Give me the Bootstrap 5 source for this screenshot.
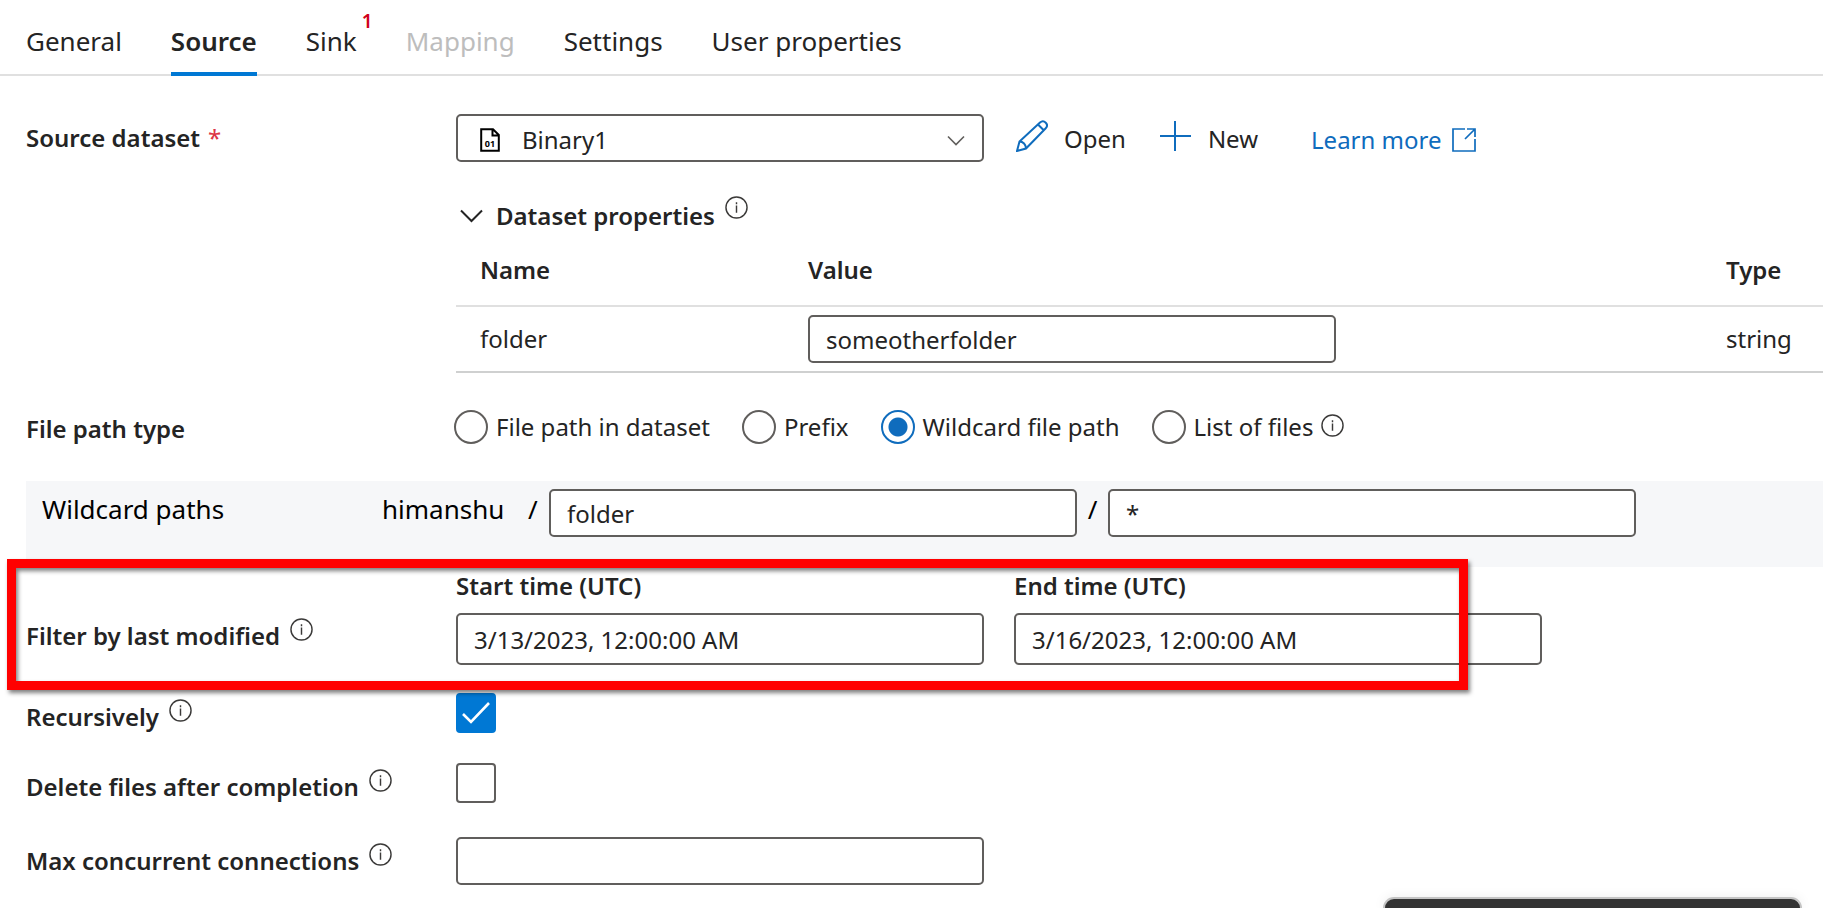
<!DOCTYPE html>
<html lang="en">
<head>
<meta charset="utf-8">
<meta name="viewport" content="width=device-width, initial-scale=1">
<title>Copy activity - Source</title>
<link href="https://cdn.jsdelivr.net/npm/bootstrap@5.3.0/dist/css/bootstrap.min.css" rel="stylesheet">
<style>
  :root { --ink: #242424; --line: #605e5c; --blue: #0078d4; --link: #0f6cbd; --field: 528px; }
  body { font-family: "Noto Sans", "Open Sans", sans-serif; font-size: 24px; line-height: 34px; color: var(--ink); background: #fff; overflow-x: hidden; }
  svg { display: block; flex: none; }
  .tabs { padding-left: 26px; gap: 49px; border-bottom: 2px solid #e0e0e0; font-size: 26px; }
  .tabs .nav-link { padding: 22px 0 14px; height: 74px; line-height: 38px; color: var(--ink); position: relative; }
  .tabs .active { font-weight: 600; }
  .tabs .active::after { content: ""; position: absolute; left: 0; right: 0; bottom: -2px; height: 4px; background: var(--blue); }
  .tabs .disabled { color: #bdbdbd; }
  .tabs .errors { position: absolute; left: 100%; top: 10px; margin-left: 5px; font-size: 19px; line-height: 22px; font-weight: 600; color: #d0021b; }
  .form-area { padding: 38px 0 0 26px; }
  .field-row { display: grid; grid-template-columns: 430px minmax(0, 1fr); }
  .field-name { font-weight: 600; display: flex; align-items: center; gap: 10px; height: 34px; white-space: nowrap; }
  .field-name svg { margin-bottom: 14px; }
  .required { gap: 8px; }
  .drop { padding-top: 8px; height: 40px; }
  .box { width: 100%; max-width: var(--field); height: 48px; border: 2px solid var(--line); border-radius: 5px; padding: 0 16px; color: var(--ink); background: #fff; font: inherit; }
  .box.tall { height: 52px; }
  .picker { position: relative; flex: 0 1 var(--field); }
  .picker select { appearance: none; padding: 3px 16px 0 64px; }
  .picker svg { position: absolute; top: 14px; pointer-events: none; }
  .picker .doc { left: 24px; }
  .picker .chev { right: 19px; top: 21px; }
  .cmd { border: 0; background: none; padding: 2px 0 0; margin-left: 32px; color: var(--ink); display: flex; align-items: center; gap: 16px; }
  .cmd + .cmd { margin-left: 34px; gap: 17px; }
  .cmd svg { margin-bottom: 6px; }
  .more { color: var(--link); text-decoration: none; padding-top: 4px; margin-left: 53px; gap: 10px; }
  .toggle-btn { border: 0; background: none; font-weight: 600; padding: 0 0 0 4px; margin-top: 34px; gap: 13px; height: 40px; color: var(--ink); }
  .toggle-btn .field-name svg { margin-bottom: 18px; }
  .props { margin: 0; width: 100%; table-layout: fixed; border-collapse: separate; border-spacing: 0; }
  .props th { height: 71px; font-weight: 600; border-bottom: 2px solid #e0e0e0; padding: 0 0 1px; }
  .props td { height: 66px; border-bottom: 2px solid #cfd0d0; padding: 0; }
  .props tr > :first-child { padding-left: 24px; width: 352px; }
  .props tr > :last-child { width: 97px; }
  .radios { gap: 32px; margin-left: -2px; }
  .opt { display: flex; align-items: center; gap: 8px; }
  .opt input { appearance: none; width: 34px; height: 34px; margin: 0; border: 2px solid var(--line); border-radius: 50%; background: #fff; }
  .opt input:checked { border-color: var(--link); background: radial-gradient(circle, var(--link) 9px, #fff 10px); }
  .band { background: #f6f7f9; height: 86px; padding: 8px 0 0 16px; color: #000; font-size: 26px; line-height: 40px; grid-template-columns: 340px minmax(0, 1fr); }
  .band .box { font-size: 24px; color: var(--ink); }
  .container-name { width: 146px; }
  .slash { width: 21px; }
  .slash-mid { width: 31px; text-align: center; }
  .filter-name { align-self: end; margin-bottom: 12px; }
  .times { display: flex; gap: 30px; }
  .time { flex: 0 1 var(--field); }
  .time .field-name { height: 38px; margin-bottom: 8px; }
  .mark-frame { position: absolute; inset: -8px 355px -25px -19px; border: 9px solid #f00; filter: drop-shadow(2px 3px 2px rgba(0,0,0,.5)); pointer-events: none; }
  .tick { appearance: none; display: block; width: 40px; height: 40px; margin: 0; border: 2px solid var(--line); border-radius: 4px; background: #fff; }
  .tick:checked { border-color: var(--blue); background: var(--blue) url("data:image/svg+xml,%3Csvg xmlns='http://www.w3.org/2000/svg' width='36' height='36' fill='none' stroke='white' stroke-width='2.6'%3E%3Cpath d='M5 19l8 8L31 8'/%3E%3C/svg%3E") center no-repeat; }
  .gap-above-s { margin-top: 30px; }
  .gap-above { margin-top: 37px; }
  .toast-peek { position: fixed; right: 21px; bottom: 0; width: 419px; height: 11px; border: 2px solid #c4c4c4; border-bottom: 0; border-radius: 18px 18px 0 0; background: #333; box-shadow: 0 0 12px rgba(0,0,0,.08); }
</style>
</head>
<body>
<svg class="d-none" xmlns="http://www.w3.org/2000/svg">
  <symbol id="info" viewBox="0 0 24 24"><circle cx="12" cy="12" r="11" fill="none" stroke="#3b3a39" stroke-width="1.5"/><path d="M12 10v7.500M12 6.500v2" stroke="#3b3a39" stroke-width="1.500"/></symbol>
</svg>

<nav class="nav flex-nowrap tabs">
  <a class="nav-link" href="#">General</a>
  <a class="nav-link active" href="#" aria-current="page">Source</a>
  <a class="nav-link" href="#">Sink<span class="errors">1</span></a>
  <a class="nav-link disabled" href="#" aria-disabled="true">Mapping</a>
  <a class="nav-link" href="#">Settings</a>
  <a class="nav-link text-nowrap" href="#">User properties</a>
</nav>

<main class="form-area">
  <div class="field-row">
    <label class="field-name required drop" for="dataset">Source dataset <span class="text-danger fw-normal">*</span></label>
    <div>
      <div class="d-flex">
        <div class="picker">
          <svg class="doc" width="20" height="24" viewBox="0 0 20 24"><path d="M1.200 1.200H13L18.800 7V22.800H1.200Z M12.500 1.500V7.500H18.500" fill="none" stroke="#000" stroke-width="2"/><text x="10" y="18.500" text-anchor="middle" font-size="9" font-weight="700">01</text></svg>
          <select id="dataset" class="box"><option>Binary1</option></select>
          <svg class="chev" width="18" height="12" viewBox="0 0 18 12"><path d="M1 1.500l8 8 8-8" fill="none" stroke="#605e5c" stroke-width="1.600"/></svg>
        </div>
        <button class="cmd" type="button">
          <svg width="32" height="32" viewBox="0 0 32 32" fill="none" stroke="#0f6cbd" stroke-width="2"><path d="M1 31L3.500 21.500L24 2.500C28-1 33.500 4.500 29.500 8.500L10 28.500ZM3.500 21.500C7 21.500 10 24.500 10 28.500M22 4.500L28 10.500"/></svg>Open</button>
        <button class="cmd" type="button">
          <svg width="31" height="32" viewBox="0 0 31 32"><path d="M0 16H31M15 1V31" stroke="#0f6cbd" stroke-width="2"/></svg>New</button>
        <a class="more d-flex align-items-center" href="#">Learn more
          <svg width="24" height="24" viewBox="0 0 24 24" fill="none" stroke="#0f6cbd" stroke-width="1.700"><path d="M13 1H1V23H23V11M15 1H23V9M23 1L13 11"/></svg></a>
      </div>
      <button type="button" class="toggle-btn d-flex align-items-center" aria-expanded="true">
        <svg width="23" height="14" viewBox="0 0 23 14"><path d="M1 1.500l10.500 10.500L22 1.500" fill="none" stroke="#242424" stroke-width="2"/></svg>
        <span class="field-name">Dataset properties <svg width="23" height="23"><use href="#info"/></svg></span>
      </button>
      <table class="props">
        <thead><tr><th>Name</th><th>Value</th><th>Type</th></tr></thead>
        <tbody><tr><td>folder</td><td><input class="box d-block" value="someotherfolder" aria-label="folder value"></td><td>string</td></tr></tbody>
      </table>
    </div>
  </div>

  <div class="field-row gap-above" role="radiogroup" aria-labelledby="fpt">
    <div class="field-name pt-1" id="fpt">File path type</div>
    <div class="d-flex text-nowrap radios">
      <label class="opt"><input type="radio" name="path">File path in dataset</label>
      <label class="opt"><input type="radio" name="path">Prefix</label>
      <label class="opt"><input type="radio" name="path" checked>Wildcard file path</label>
      <label class="opt"><input type="radio" name="path">List of files <svg class="mb-1" width="23" height="23"><use href="#info"/></svg></label>
    </div>
  </div>

  <div class="field-row band gap-above">
    <div>Wildcard paths</div>
    <div class="d-flex">
      <span class="container-name">himanshu</span><span class="slash">/</span>
      <input class="box" value="folder" aria-label="Wildcard folder path">
      <span class="slash-mid">/</span>
      <input class="box" value="*" aria-label="Wildcard file name">
    </div>
  </div>

  <div class="field-row position-relative">
    <div class="field-name filter-name">Filter by last modified <svg width="23" height="23"><use href="#info"/></svg></div>
    <div class="times">
      <div class="time"><label class="field-name" for="start">Start time (UTC)</label><input id="start" class="box tall d-block" value="3/13/2023, 12:00:00 AM"></div>
      <div class="time"><label class="field-name" for="end">End time (UTC)</label><input id="end" class="box tall d-block" value="3/16/2023, 12:00:00 AM"></div>
    </div>
    <div class="mark-frame"></div>
  </div>

  <div class="field-row mt-4 pt-1">
    <label class="field-name drop" for="rec">Recursively <svg width="23" height="23"><use href="#info"/></svg></label>
    <input id="rec" class="tick" type="checkbox" checked>
  </div>
  <div class="field-row gap-above-s">
    <label class="field-name drop" for="del">Delete files after completion <svg width="23" height="23"><use href="#info"/></svg></label>
    <input id="del" class="tick" type="checkbox">
  </div>
  <div class="field-row gap-above-s pt-1">
    <label class="field-name drop" for="max">Max concurrent connections <svg width="23" height="23"><use href="#info"/></svg></label>
    <input id="max" class="box">
  </div>
</main>
<div class="toast-peek"></div>
<script src="https://cdn.jsdelivr.net/npm/bootstrap@5.3.0/dist/js/bootstrap.bundle.min.js"></script>
</body>
</html>
